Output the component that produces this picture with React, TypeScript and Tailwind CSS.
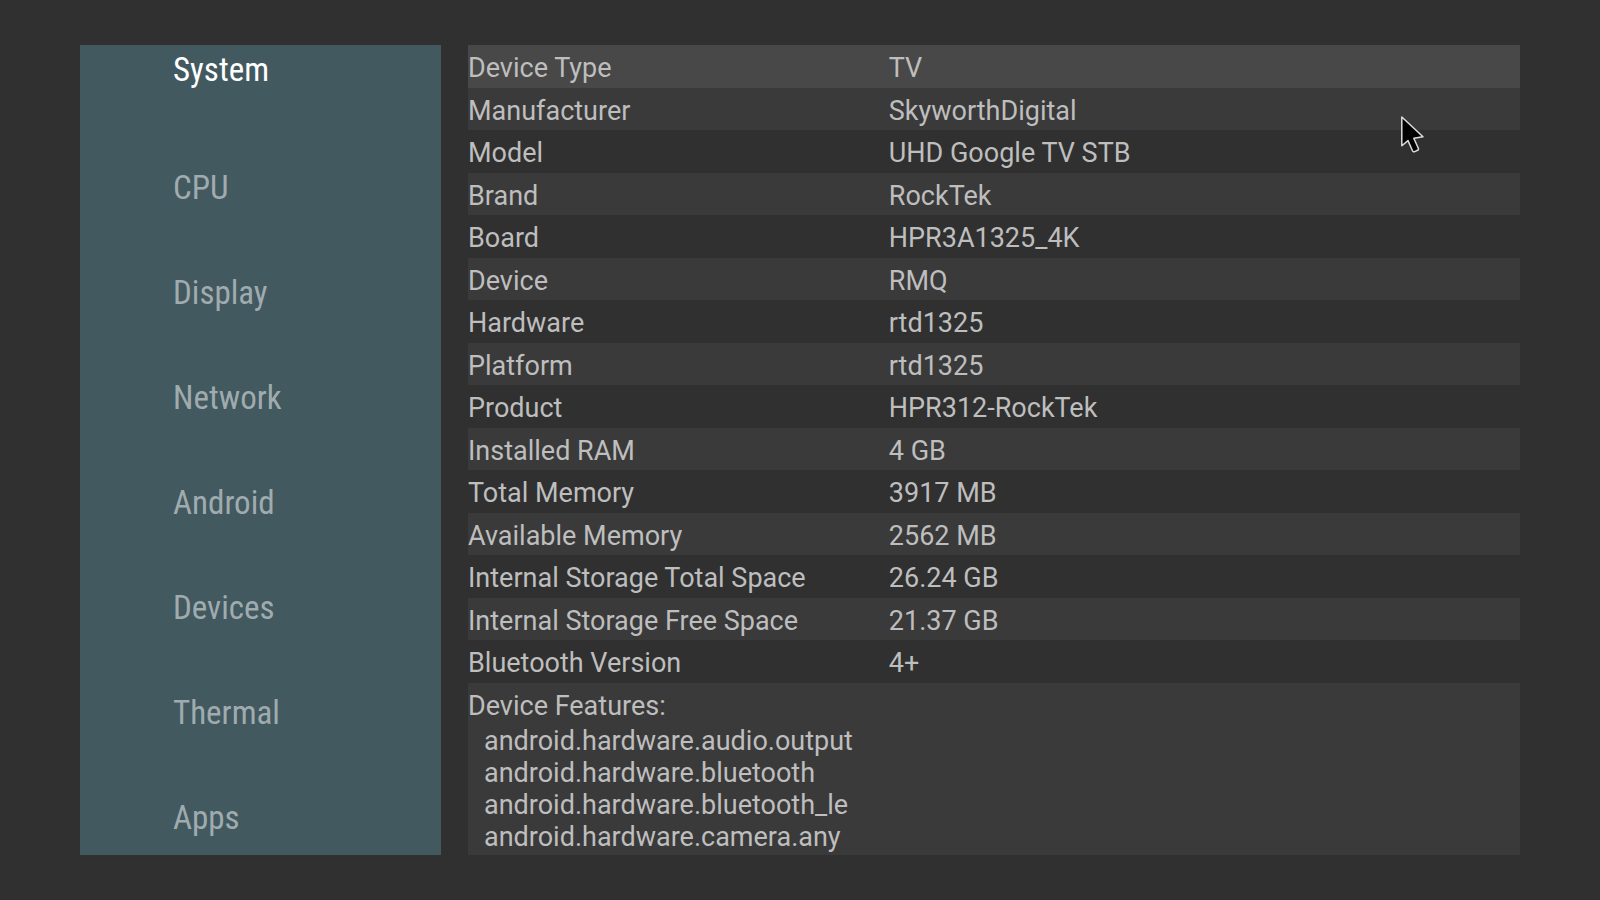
const tabs = ['System', 'CPU', 'Display', 'Network', 'Android', 'Devices', 'Thermal', 'Apps'];

const rows: [string, string][] = [
  ['Device Type', 'TV'],
  ['Manufacturer', 'SkyworthDigital'],
  ['Model', 'UHD Google TV STB'],
  ['Brand', 'RockTek'],
  ['Board', 'HPR3A1325_4K'],
  ['Device', 'RMQ'],
  ['Hardware', 'rtd1325'],
  ['Platform', 'rtd1325'],
  ['Product', 'HPR312-RockTek'],
  ['Installed RAM', '4 GB'],
  ['Total Memory', '3917 MB'],
  ['Available Memory', '2562 MB'],
  ['Internal Storage Total Space', '26.24 GB'],
  ['Internal Storage Free Space', '21.37 GB'],
  ['Bluetooth Version', '4+'],
];

const features = [
  'android.hardware.audio.output',
  'android.hardware.bluetooth',
  'android.hardware.bluetooth_le',
  'android.hardware.camera.any',
];

function rowStyle(index: number) {
  if (index === 0) return 'bg-[#484848] leading-[39px]';
  return index % 2 === 1 ? 'bg-[#3a3a3a] leading-[38px]' : 'bg-[#303030] leading-[39px]';
}

function Pointer() {
  return (
    <svg className="absolute top-[115px] left-[1400px] h-10 w-6" viewBox="0 0 24 40" aria-hidden="true">
      <path
        d="M1.800 2V30.800L8 25.600 12.500 35.800Q13.200 37.300 14.700 36.600L17.600 35.300Q19 34.600 18.300 33.200L13.800 23.200 23 21.800Z"
        fill="#000"
        stroke="#dcdcdc"
        strokeWidth="1.500"
        strokeLinejoin="round"
      />
    </svg>
  );
}

export default function App() {
  return (
    <div className="relative flex min-h-screen gap-[27px] bg-[#303030] px-20 py-[45px] font-['Roboto',sans-serif] text-[#bebebe]">
      <nav
        className="flex w-[361px] shrink-0 flex-col gap-[55px] bg-[#41595f] pl-[93px] font-['Roboto_Condensed','Roboto',sans-serif] text-[33px] leading-[50px]"
        aria-label="Sections"
      >
        {tabs.map((tab, i) => (
          <button
            key={tab}
            type="button"
            aria-current={i === 0 ? 'page' : undefined}
            className={i === 0 ? 'mb-[13px] text-left text-white' : 'text-left text-[#a0abaf]'}
          >
            {tab}
          </button>
        ))}
      </nav>
      <main className="min-w-0 flex-1 text-[27px]">
        <table className="w-full table-fixed border-collapse text-left">
          <colgroup>
            <col className="w-2/5" />
            <col />
          </colgroup>
          <tbody>
            {rows.map(([name, value], i) => (
              <tr key={name} className={rowStyle(i)}>
                <th scope="row" className="p-0 pt-1 font-normal">{name}</th>
                <td className="p-0 pt-1">{value}</td>
              </tr>
            ))}
          </tbody>
        </table>
        <section className="bg-[#3a3a3a] pt-1 pb-0.5">
          <h2 className="leading-[38px]">Device Features:</h2>
          <ul className="pl-4 leading-8">
            {features.map((f) => (
              <li key={f}>{f}</li>
            ))}
          </ul>
        </section>
      </main>
      <Pointer />
    </div>
  );
}
